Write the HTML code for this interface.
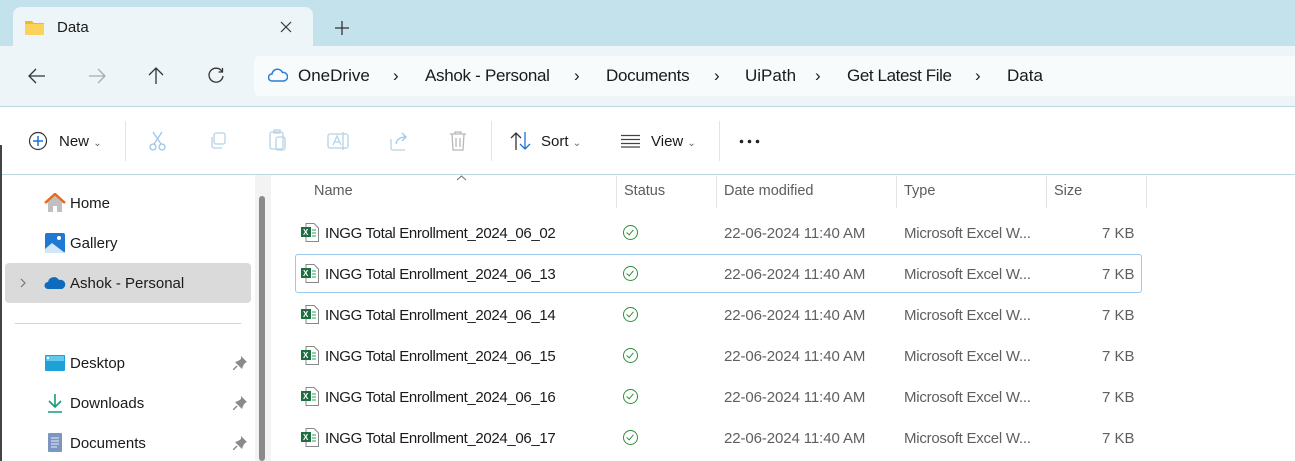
<!DOCTYPE html>
<html><head><meta charset="utf-8"><style>
*{margin:0;padding:0;box-sizing:border-box}
body{width:1295px;height:461px;overflow:hidden;background:#fff;font-family:"Segoe UI","Liberation Sans",sans-serif;font-size:15px;color:#1a1a1a;position:relative}
.abs{position:absolute}
.top{left:0;top:0;width:1295px;height:47px;background:#c4e2eb}
.tab{left:13px;top:7px;width:300px;height:40px;background:#eef5f8;border-radius:8px 8px 0 0}
.nav{left:0;top:46px;width:1295px;height:61px;background:#eef5f8;border-bottom:1px solid #bcd8e0}
.addr{left:254px;top:56px;width:1041px;height:40px;background:#f8fbfc;border-radius:6px 0 0 6px}
.t{position:absolute;white-space:nowrap}
.tb{left:0;top:107px;width:1295px;height:68px;background:#fff;border-bottom:1px solid #bcd8e0}
.sep{position:absolute;width:1px;background:#e3e3e3}
.side{left:0;top:175px;width:255px;height:286px;background:#fff}
.sb{left:255px;top:175px;width:16px;height:286px;background:#f3f3f3}
.hdr{color:#5c5c5c;font-size:14.5px}
.row{position:absolute;left:272px;width:1023px;height:41px}
.row .n{left:53px;top:12px;letter-spacing:-0.35px}
.row .d{left:452px;top:12px;color:#5f5f5f;letter-spacing:-0.1px}
.row .ty{left:632px;top:12px;color:#5f5f5f;letter-spacing:-0.25px}
.row .s{left:830px;top:12px;color:#5f5f5f}
.xl{position:absolute;left:29px;top:10px;width:18px;height:19px}
.ok{position:absolute;left:351px;top:12px;width:15px;height:15px;border:1.5px solid #2f8f3c;border-radius:50%}
.ok:after{content:"";position:absolute;left:3.5px;top:2px;width:3px;height:6px;border-right:1.5px solid #2f8f3c;border-bottom:1.5px solid #2f8f3c;transform:rotate(40deg)}
.side .t,.sl{top:0}
</style></head><body>
<div class="abs top"></div>
<div class="abs tab"></div>
<svg class="abs" style="left:25px;top:19px" width="19" height="16" viewBox="0 0 19 16"><path d="M0 2h7l2 2h10v12H0z" fill="#f0b92a"/><path d="M0 5h19v11H0z" fill="#fbd25b"/></svg>
<div class="t" style="left:57px;top:19px;font-size:15px">Data</div>
<svg class="abs" style="left:280px;top:21px" width="12" height="12" stroke="#333" stroke-width="1.2"><path d="M1 1l10 10M11 1L1 11"/></svg>
<svg class="abs" style="left:335px;top:21px" width="14" height="14" stroke="#333" stroke-width="1.3"><path d="M7 0v14M0 7h14"/></svg>
<div class="abs nav"></div>
<div class="abs addr"></div>
<svg class="abs" style="left:28px;top:68px" width="18" height="16" fill="none" stroke="#333" stroke-width="1.3"><path d="M17 8H1M8 1L1 8l7 7"/></svg>
<svg class="abs" style="left:88px;top:68px" width="18" height="16" fill="none" stroke="#aaa" stroke-width="1.3"><path d="M1 8h16M10 1l7 7-7 7"/></svg>
<svg class="abs" style="left:148px;top:67px" width="16" height="18" fill="none" stroke="#333" stroke-width="1.3"><path d="M8 17V1M1 8l7-7 7 7"/></svg>
<svg class="abs" style="left:207px;top:67px" width="18" height="18" fill="none" stroke="#333" stroke-width="1.3"><path d="M15 4.5A7 7 0 1 0 16 9"/><path d="M15.5 1v4h-4"/></svg>
<svg class="abs" style="left:268px;top:68px" width="20" height="14" viewBox="0 0 20 14"><path d="M4 13a3.5 3.5 0 0 1 0-7 5.5 5.5 0 0 1 10.5-1.5A4 4 0 0 1 16 13z" fill="none" stroke="#2b7cd3" stroke-width="1.5"/></svg>
<div class="t" style="left:298px;top:66px;font-size:17px">OneDrive</div>
<div class="t" style="left:393px;top:66px;font-size:17px">›</div>
<div class="t" style="left:425px;top:66px;font-size:17px;letter-spacing:-0.3px">Ashok - Personal</div>
<div class="t" style="left:574px;top:66px;font-size:17px">›</div>
<div class="t" style="left:606px;top:66px;font-size:17px;letter-spacing:-0.3px">Documents</div>
<div class="t" style="left:714px;top:66px;font-size:17px">›</div>
<div class="t" style="left:745px;top:66px;font-size:17px">UiPath</div>
<div class="t" style="left:815px;top:66px;font-size:17px">›</div>
<div class="t" style="left:847px;top:66px;font-size:17px;letter-spacing:-0.4px">Get Latest File</div>
<div class="t" style="left:975px;top:66px;font-size:17px">›</div>
<div class="t" style="left:1007px;top:66px;font-size:17px">Data</div>
<div class="abs tb"></div>
<svg class="abs" style="left:28px;top:131px" width="20" height="20"><circle cx="10" cy="10" r="8.5" fill="none" stroke="#333" stroke-width="1.2"/><path d="M10 5v10M5 10h10" stroke="#1a73d9" stroke-width="1.5"/></svg>
<div class="t" style="left:59px;top:133px">New <span style="font-size:10px;color:#666">⌄</span></div>
<div class="sep" style="left:125px;top:121px;height:40px"></div>
<svg class="abs" style="left:147px;top:130px" width="22" height="22" fill="none" stroke="#9cc6ea" stroke-width="1.3"><circle cx="6" cy="17" r="3"/><circle cx="15" cy="17" r="3"/><path d="M7 14L15 2M14 14L6 2"/></svg>
<svg class="abs" style="left:208px;top:131px" width="20" height="20" fill="none" stroke="#b8d2e6" stroke-width="1.3"><rect x="6" y="2" width="11" height="11" rx="2"/><path d="M4 6v9a2 2 0 0 0 2 2h8"/></svg>
<svg class="abs" style="left:268px;top:129px" width="20" height="22" fill="none" stroke="#b8d2e6" stroke-width="1.3"><rect x="2" y="3" width="13" height="17" rx="2"/><rect x="8" y="8" width="9" height="13" rx="2"/><rect x="6" y="1" width="6" height="3"/></svg>
<svg class="abs" style="left:327px;top:131px" width="22" height="20" fill="none" stroke="#b8d2e6" stroke-width="1.3"><rect x="1" y="3" width="20" height="14" rx="2"/><path d="M6 14l4-9 4 9M7.5 11h5M16 1v18"/></svg>
<svg class="abs" style="left:388px;top:131px" width="22" height="20" fill="none" stroke="#b8d2e6" stroke-width="1.3"><path d="M3 8v9a2 2 0 0 0 2 2h12"/><path d="M8 13c1-5 5-7 10-7M14 2l4 4-4 4" stroke="#9cc6ea"/></svg>
<svg class="abs" style="left:448px;top:130px" width="20" height="22" fill="none" stroke="#b8b8b8" stroke-width="1.3"><path d="M2 4h16M7 4V2h6v2M4 4l1 16h10l1-16M8 8v9M12 8v9"/></svg>
<div class="sep" style="left:491px;top:121px;height:40px"></div>
<svg class="abs" style="left:510px;top:131px" width="22" height="20" fill="none" stroke-width="1.3"><path d="M6 19V2M1 7l5-5 5 5" stroke="#333"/><path d="M15 1v17M10 13l5 5 5-5" stroke="#1a73d9"/></svg>
<div class="t" style="left:541px;top:133px">Sort <span style="font-size:10px;color:#666">⌄</span></div>
<svg class="abs" style="left:620px;top:134px" width="21" height="14" stroke="#444" stroke-width="1.2"><path d="M1 1.5h19M1 5.5h19M1 9.5h19M1 13h19"/></svg>
<div class="t" style="left:651px;top:133px">View <span style="font-size:10px;color:#666">⌄</span></div>
<div class="sep" style="left:719px;top:121px;height:40px"></div>
<svg class="abs" style="left:739px;top:139px" width="22" height="5" fill="#222"><circle cx="2.5" cy="2.5" r="1.8"/><circle cx="10.5" cy="2.5" r="1.8"/><circle cx="18.5" cy="2.5" r="1.8"/></svg>
<div class="abs side"></div>
<div class="abs" style="left:0;top:145px;width:2px;height:316px;background:#444"></div>
<svg class="abs" style="left:44px;top:193px" width="22" height="20"><path d="M11 1L1 10h3v9h14v-9h3z" fill="#c0c0c0"/><path d="M1 10L11 1l10 9" fill="none" stroke="#e86c1a" stroke-width="2.5"/><rect x="9" y="13" width="4" height="6" fill="#fff"/></svg>
<div class="t" style="left:70px;top:195px">Home</div>
<svg class="abs" style="left:45px;top:233px" width="20" height="20"><rect x="0" y="0" width="20" height="20" rx="2" fill="#1f78d1"/><path d="M0 16l7-6 13 10H0z" fill="#cfe6fb"/><circle cx="14" cy="5" r="2" fill="#fff"/></svg>
<div class="t" style="left:70px;top:235px">Gallery</div>
<div class="abs" style="left:5px;top:263px;width:246px;height:40px;background:#dadada;border-radius:4px"></div>
<svg class="abs" style="left:20px;top:278px" width="6" height="10" fill="none" stroke="#777" stroke-width="1.2"><path d="M1 1l4 4-4 4"/></svg>
<svg class="abs" style="left:44px;top:276px" width="22" height="14"><path d="M4 13a3.5 3.5 0 0 1 0-7 6 6 0 0 1 11-2 4.5 4.5 0 0 1 3 9z" fill="#0f6cbd"/></svg>
<div class="t" style="left:70px;top:275px">Ashok - Personal</div>
<div class="abs" style="left:15px;top:323px;width:226px;height:1px;background:#d4d4d4"></div>
<svg class="abs" style="left:45px;top:355px" width="20" height="17"><rect width="20" height="16" rx="1" fill="#1ea1d6"/><rect x="1" y="1" width="18" height="5" fill="#5fc9ee"/><rect x="2" y="2" width="2" height="2" fill="#fff"/></svg>
<div class="t" style="left:70px;top:355px">Desktop</div>
<svg class="abs" style="left:47px;top:393px" width="16" height="20" stroke="#159e79" stroke-width="1.6" fill="none"><path d="M8 1v13M2 8l6 6 6-6M1 19h14"/></svg>
<div class="t" style="left:70px;top:395px">Downloads</div>
<svg class="abs" style="left:48px;top:433px" width="14" height="19"><rect width="14" height="19" rx="1" fill="#7b96c2"/><path d="M3 5h8M3 8h8M3 11h8M3 14h6" stroke="#e8eef7"/></svg>
<div class="t" style="left:70px;top:435px">Documents</div>
<svg class="abs" style="left:233px;top:356px" width="14" height="14" fill="#8a8a8a"><path d="M8 0l6 6-2 1-2 3-1 3-7-7 3-1 3-2z"/><path d="M4 10l-4 4" stroke="#8a8a8a" stroke-width="1.5"/></svg>
<svg class="abs" style="left:233px;top:396px" width="14" height="14" fill="#8a8a8a"><path d="M8 0l6 6-2 1-2 3-1 3-7-7 3-1 3-2z"/><path d="M4 10l-4 4" stroke="#8a8a8a" stroke-width="1.5"/></svg>
<svg class="abs" style="left:233px;top:436px" width="14" height="14" fill="#8a8a8a"><path d="M8 0l6 6-2 1-2 3-1 3-7-7 3-1 3-2z"/><path d="M4 10l-4 4" stroke="#8a8a8a" stroke-width="1.5"/></svg>
<div class="abs sb"></div>
<div class="abs" style="left:259px;top:196px;width:6px;height:265px;background:#8a8a8a;border-radius:3px"></div>
<svg class="abs" style="left:456px;top:175px" width="11" height="6" fill="none" stroke="#777" stroke-width="1.1"><path d="M1 5l4.5-4 4.5 4"/></svg>
<div class="t hdr" style="left:314px;top:183px">Name</div>
<div class="sep" style="left:616px;top:176px;height:32px"></div>
<div class="t hdr" style="left:624px;top:183px">Status</div>
<div class="sep" style="left:716px;top:176px;height:32px"></div>
<div class="t hdr" style="left:724px;top:183px">Date modified</div>
<div class="sep" style="left:896px;top:176px;height:32px"></div>
<div class="t hdr" style="left:904px;top:183px">Type</div>
<div class="sep" style="left:1046px;top:176px;height:32px"></div>
<div class="t hdr" style="left:1054px;top:183px">Size</div>
<div class="sep" style="left:1146px;top:176px;height:32px"></div>
<div class="abs" style="left:295px;top:254px;width:847px;height:39px;border:1px solid #99c9ef;border-radius:3px"></div>

<div class="row" style="top:213px"><svg class="xl"><path d="M5 .5h8l4.5 4.5v13.5H5z" fill="#fff" stroke="#888"/><rect x="0" y="4" width="10" height="10" fill="#1d6f42"/><text x="2" y="12" font-size="8" fill="#fff" font-family="Liberation Sans" font-weight="bold">X</text><path d="M11 7h4M11 10h4M11 13h4" stroke="#21a366"/></svg><div class="t n">INGG Total Enrollment_2024_06_02</div><div class="ok"></div><div class="t d">22-06-2024 11:40 AM</div><div class="t ty">Microsoft Excel W...</div><div class="t s">7 KB</div></div>
<div class="row" style="top:254px"><svg class="xl"><path d="M5 .5h8l4.5 4.5v13.5H5z" fill="#fff" stroke="#888"/><rect x="0" y="4" width="10" height="10" fill="#1d6f42"/><text x="2" y="12" font-size="8" fill="#fff" font-family="Liberation Sans" font-weight="bold">X</text><path d="M11 7h4M11 10h4M11 13h4" stroke="#21a366"/></svg><div class="t n">INGG Total Enrollment_2024_06_13</div><div class="ok"></div><div class="t d">22-06-2024 11:40 AM</div><div class="t ty">Microsoft Excel W...</div><div class="t s">7 KB</div></div>
<div class="row" style="top:295px"><svg class="xl"><path d="M5 .5h8l4.5 4.5v13.5H5z" fill="#fff" stroke="#888"/><rect x="0" y="4" width="10" height="10" fill="#1d6f42"/><text x="2" y="12" font-size="8" fill="#fff" font-family="Liberation Sans" font-weight="bold">X</text><path d="M11 7h4M11 10h4M11 13h4" stroke="#21a366"/></svg><div class="t n">INGG Total Enrollment_2024_06_14</div><div class="ok"></div><div class="t d">22-06-2024 11:40 AM</div><div class="t ty">Microsoft Excel W...</div><div class="t s">7 KB</div></div>
<div class="row" style="top:336px"><svg class="xl"><path d="M5 .5h8l4.5 4.5v13.5H5z" fill="#fff" stroke="#888"/><rect x="0" y="4" width="10" height="10" fill="#1d6f42"/><text x="2" y="12" font-size="8" fill="#fff" font-family="Liberation Sans" font-weight="bold">X</text><path d="M11 7h4M11 10h4M11 13h4" stroke="#21a366"/></svg><div class="t n">INGG Total Enrollment_2024_06_15</div><div class="ok"></div><div class="t d">22-06-2024 11:40 AM</div><div class="t ty">Microsoft Excel W...</div><div class="t s">7 KB</div></div>
<div class="row" style="top:377px"><svg class="xl"><path d="M5 .5h8l4.5 4.5v13.5H5z" fill="#fff" stroke="#888"/><rect x="0" y="4" width="10" height="10" fill="#1d6f42"/><text x="2" y="12" font-size="8" fill="#fff" font-family="Liberation Sans" font-weight="bold">X</text><path d="M11 7h4M11 10h4M11 13h4" stroke="#21a366"/></svg><div class="t n">INGG Total Enrollment_2024_06_16</div><div class="ok"></div><div class="t d">22-06-2024 11:40 AM</div><div class="t ty">Microsoft Excel W...</div><div class="t s">7 KB</div></div>
<div class="row" style="top:418px"><svg class="xl"><path d="M5 .5h8l4.5 4.5v13.5H5z" fill="#fff" stroke="#888"/><rect x="0" y="4" width="10" height="10" fill="#1d6f42"/><text x="2" y="12" font-size="8" fill="#fff" font-family="Liberation Sans" font-weight="bold">X</text><path d="M11 7h4M11 10h4M11 13h4" stroke="#21a366"/></svg><div class="t n">INGG Total Enrollment_2024_06_17</div><div class="ok"></div><div class="t d">22-06-2024 11:40 AM</div><div class="t ty">Microsoft Excel W...</div><div class="t s">7 KB</div></div>
</body></html>
